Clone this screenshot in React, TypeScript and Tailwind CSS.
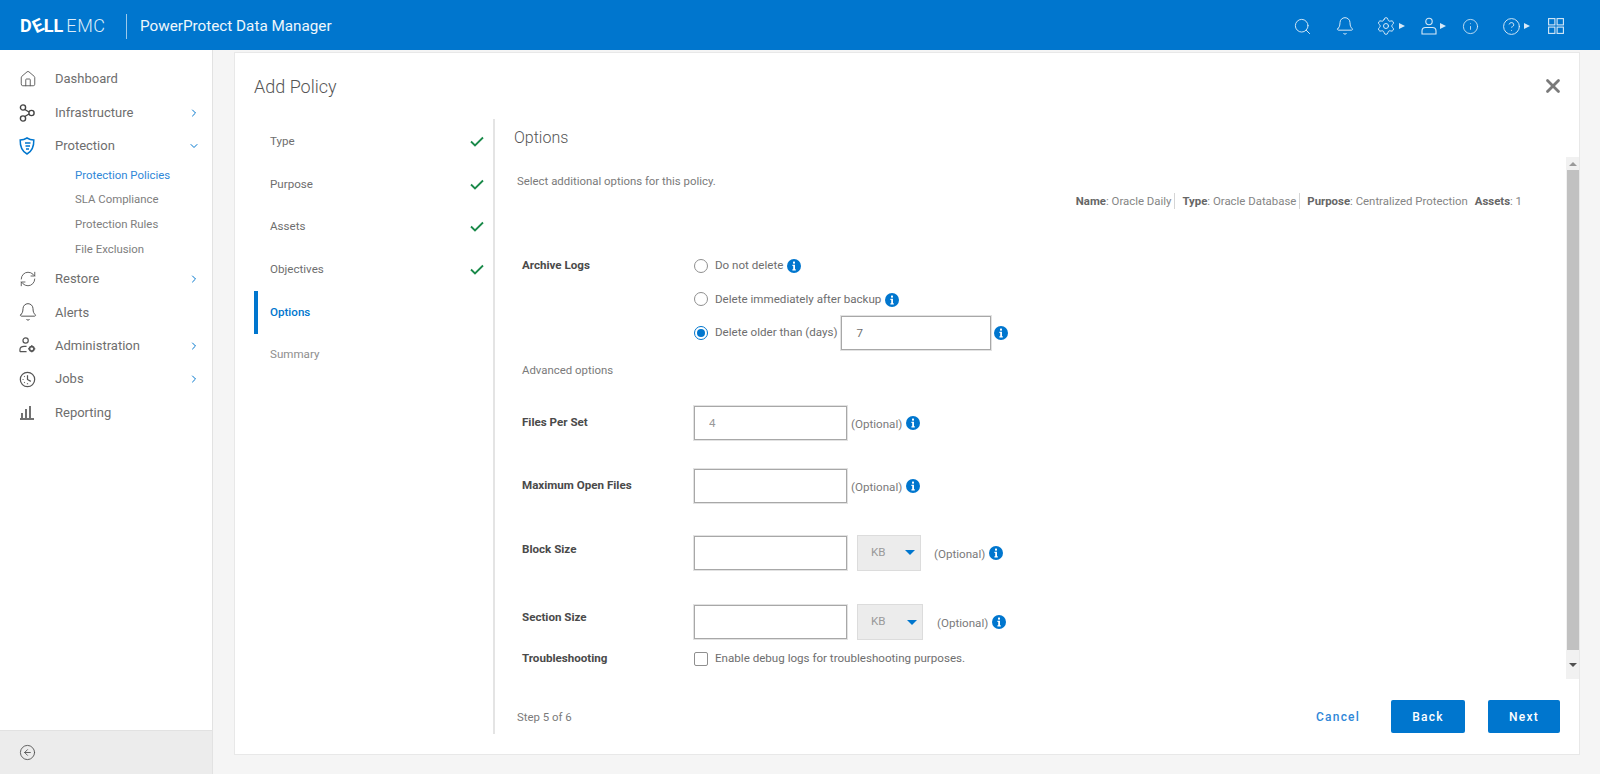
import { Bell, ChevronDown, ChevronRight, CircleArrowLeft, CircleHelp, House, Info, RefreshCw, Search, Settings, X } from "lucide-react";
import type { ReactNode } from "react";

const navIcon = "h-[18px] w-[18px] text-[#555]";

function InfraIcon() {
  return (
    <svg viewBox="0 0 16 18" className="h-[18px] w-[16px] text-[#444]" fill="none" stroke="currentColor" strokeWidth="1.4">
      <circle cx="4" cy="3.5" r="2.6" />
      <circle cx="4" cy="14.5" r="2.6" />
      <circle cx="12.5" cy="9" r="2.6" />
      <path d="M5.8 5.5 10 8M5.8 12.5 10 10" />
    </svg>
  );
}

function ShieldIcon() {
  return (
    <svg viewBox="0 0 16 18" className="h-[18px] w-[16px] text-[#0076ce]" fill="none" stroke="currentColor" strokeWidth="1.5">
      <path d="M8 1c2 1.300 4.300 2 6.800 2 .2 6.500-1.500 11.200-6.800 14C2.700 14.200 1 9.500 1.200 3 3.700 3 6 2.300 8 1Z" />
      <path d="M6 6h5.500M6.500 9H11M7 12h3" />
    </svg>
  );
}

function AdminIcon() {
  return (
    <svg viewBox="0 0 18 18" className="h-[17px] w-[17px] text-[#555]" fill="none" stroke="currentColor" strokeWidth="1.3">
      <circle cx="7" cy="3.800" r="2.800" />
      <path d="M1 15.500v-2c0-2.200 2-3.500 4.500-3.500H8M1 15.500h7" />
      <circle cx="13.500" cy="12.500" r="2.400" strokeWidth="1.800" />
      <path d="M13.500 8.800v1M13.500 15.200v1M9.800 12.500h1M16.200 12.500h1" strokeWidth="1.600" />
    </svg>
  );
}

function JobsIcon() {
  return (
    <svg viewBox="0 0 18 18" className="h-[17px] w-[17px] text-[#555]" fill="none" stroke="currentColor" strokeWidth="1.3">
      <circle cx="9" cy="9" r="7.600" />
      <path d="M9 4.500V9l3.500 2M3.800 9h1M9 13v1M5.500 5.500l.6.6M5.500 12.500l.6-.6" />
    </svg>
  );
}

function ReportIcon() {
  return (
    <svg viewBox="0 0 16 16" className="h-[16px] w-[16px] text-[#444]" fill="none" stroke="currentColor" strokeWidth="1.500">
      <path d="M3 14V9M7 14V5M11 14V2M1 15h14" />
    </svg>
  );
}

function UserIcon() {
  return (
    <svg viewBox="0 0 16 18" className="h-[18px] w-[16px]" fill="none" stroke="currentColor" strokeWidth="1.100">
      <circle cx="8" cy="4.500" r="3.200" />
      <path d="M1 17v-3c0-2 1.500-3.500 3.500-3.500h7c2 0 3.500 1.500 3.500 3.500v3Z" />
    </svg>
  );
}

function GridIcon() {
  return (
    <svg viewBox="0 0 16 16" className="h-[16px] w-[16px]" fill="none" stroke="currentColor" strokeWidth="1.100">
      <rect x="0.600" y="0.600" width="6.300" height="6.300" />
      <rect x="9.100" y="0.600" width="6.300" height="6.300" />
      <rect x="0.600" y="9.100" width="6.300" height="6.300" />
      <rect x="9.100" y="9.100" width="6.300" height="6.300" />
    </svg>
  );
}

function Caret() {
  return (
    <svg viewBox="0 0 6 6" className="ml-[3px] h-[6px] w-[6px]" fill="currentColor">
      <path d="M0 0l6 3-6 3Z" />
    </svg>
  );
}

function InfoDot() {
  return (
    <svg viewBox="0 0 14 14" className="h-[14px] w-[14px] shrink-0">
      <circle cx="7" cy="7" r="7" fill="#0076ce" />
      <rect x="6" y="2.600" width="2" height="2" fill="#fff" />
      <path d="M5.400 5.800H8v4.400h.8v1.200H5.400v-1.200h.8V7h-.8Z" fill="#fff" />
    </svg>
  );
}

function Check() {
  return (
    <svg viewBox="0 0 14 11" className="h-[11px] w-[14px] text-[#1a8a4a]" fill="none" stroke="currentColor" strokeWidth="1.800">
      <path d="M1 5.500 5 9.500 13 1.500" />
    </svg>
  );
}

function NavRow({ icon, label, chevron }: { icon: ReactNode; label: string; chevron?: "right" | "down" }) {
  return (
    <div className="flex h-[33.4px] items-center pl-[19px] pr-[12px] text-[13px] text-[#6e6e6e]">
      <span className="flex w-[36px] shrink-0 items-center">{icon}</span>
      <span className="flex-1">{label}</span>
      {chevron === "right" && <ChevronRight className="h-[12px] w-[12px] text-[#0076ce]" strokeWidth={2} />}
      {chevron === "down" && <ChevronDown className="h-[12px] w-[12px] text-[#0076ce]" strokeWidth={2} />}
    </div>
  );
}

function SubRow({ label, active }: { label: string; active?: boolean }) {
  return (
    <div className={active ? "flex h-[24.9px] items-center pl-[75px] text-[11.4px] text-[#2f87d8]" : "flex h-[24.9px] items-center pl-[75px] text-[11.4px] text-[#7e7e7e]"}>
      {label}
    </div>
  );
}

function Step({ label, done, active, muted }: { label: string; done?: boolean; active?: boolean; muted?: boolean }) {
  let cls = "flex h-[42.65px] items-center border-l-4 border-transparent pl-3 pr-[9px] text-[11.6px] text-[#6e6e6e]";
  if (active) cls = "flex h-[42.65px] items-center border-l-4 border-[#0076ce] pl-3 pr-[9px] text-[11.6px] font-medium text-[#0076ce]";
  if (muted) cls = "flex h-[42.65px] items-center border-l-4 border-transparent pl-3 pr-[9px] text-[11.6px] text-[#8e8e8e]";
  return (
    <div className={cls}>
      <span className="flex-1">{label}</span>
      {done && <Check />}
    </div>
  );
}

function Radio({ label, checked }: { label: string; checked?: boolean }) {
  return (
    <span className="flex items-center text-[11.6px] text-[#6e6e6e]">
      {checked ? (
        <span className="flex h-[14px] w-[14px] items-center justify-center rounded-full border border-[#0076ce]">
          <span className="h-[8px] w-[8px] rounded-full bg-[#0076ce]" />
        </span>
      ) : (
        <span className="h-[14px] w-[14px] rounded-full border border-[#8f8f8f]" />
      )}
      <span className="ml-[7px]">{label}</span>
    </span>
  );
}

function TextBox({ value, width, faint }: { value?: string; width: string; faint?: boolean }) {
  return (
    <input
      readOnly
      value={value ?? ""}
      className={`${width} h-[34px] border border-[#a8a8a8] bg-white px-[14px] text-[11.6px] outline-none ring-1 ring-[#e2e2e2] ${faint ? "text-[#999]" : "text-[#6e6e6e]"}`}
    />
  );
}

function UnitSelect({ width }: { width: string }) {
  return (
    <span className={`${width} flex h-[36px] items-center justify-between border border-[#dcdcdc] bg-[#ececec] pl-[13px] pr-[5px] text-[11.6px] text-[#9a9a9a]`}>
      KB
      <svg viewBox="0 0 10 5" className="h-[5px] w-[10px]" fill="#0076ce">
        <path d="M0 0h10L5 5Z" />
      </svg>
    </span>
  );
}

function Field({ label, labelClass, children, rowClass }: { label: string; labelClass?: string; children: ReactNode; rowClass: string }) {
  return (
    <div className={`flex items-center ${rowClass}`}>
      <span className={`w-[172px] shrink-0 text-[11.6px] font-bold text-[#4a4a4a] ${labelClass ?? ""}`}>{label}</span>
      {children}
    </div>
  );
}

function Optional() {
  return <span className="text-[11.6px] text-[#7a7a7a]">(Optional)</span>;
}

function Meta({ name, value, divider }: { name: string; value: string; divider?: boolean }) {
  return (
    <span className={divider ? "border-r border-[#d5d5d5] pr-[3px] mr-[7px]" : "mr-[7px] last:mr-0"}>
      <span className="font-bold text-[#666]">{name}</span>
      <span className="text-[#858585]">: {value}</span>
    </span>
  );
}

export default function App() {
  return (
    <div className="flex h-[774px] w-[1600px] flex-col overflow-hidden bg-[#f5f5f5] font-['Roboto',sans-serif]">
      <header className="flex h-[50px] shrink-0 items-center bg-[#0076ce] pt-[2px] text-white">
        <div className="ml-[20px] flex w-[87px] items-baseline whitespace-nowrap text-[18px] leading-none">
          <span className="font-bold">
            D<span className="mx-[1px] inline-block -rotate-[25deg]">E</span>LL
          </span>
          <span className="ml-[3px] font-light tracking-[0.6px] text-[#dcecf8]">EMC</span>
        </div>
        <div className="ml-[19px] h-[25px] w-px bg-[#9cc9ea]" />
        <div className="ml-[13px] flex-1 text-[15.25px] text-[#eef6fc]">PowerProtect Data Manager</div>
        <div className="flex items-center text-[#d7e9f7]">
          <Search className="h-[19px] w-[19px]" strokeWidth={1.2} />
          <Bell className="ml-[23px] h-[20px] w-[20px]" strokeWidth={1.2} />
          <Settings className="ml-[21px] h-[20px] w-[20px]" strokeWidth={1.2} />
          <Caret />
          <span className="ml-[16px] flex items-center">
            <UserIcon />
            <Caret />
          </span>
          <HeaderInfo />
          <CircleHelp className="ml-[23px] h-[19px] w-[19px]" strokeWidth={1.2} />
          <Caret />
          <span className="ml-[18px] mr-[36px]">
            <GridIcon />
          </span>
        </div>
      </header>

      <div className="flex min-h-0 flex-1">
        <aside className="flex w-[213px] shrink-0 flex-col border-r border-[#e2e2e2] bg-white">
          <nav className="flex-1 pt-[12.5px]">
            <NavRow icon={<House className={navIcon} strokeWidth={1.2} />} label="Dashboard" />
            <NavRow icon={<InfraIcon />} label="Infrastructure" chevron="right" />
            <NavRow icon={<ShieldIcon />} label="Protection" chevron="down" />
            <SubRow label="Protection Policies" active />
            <SubRow label="SLA Compliance" />
            <SubRow label="Protection Rules" />
            <SubRow label="File Exclusion" />
            <NavRow icon={<RefreshCw className={navIcon} strokeWidth={1.2} />} label="Restore" chevron="right" />
            <NavRow icon={<Bell className="-ml-px h-[20px] w-[20px] text-[#555]" strokeWidth={1.2} />} label="Alerts" />
            <NavRow icon={<AdminIcon />} label="Administration" chevron="right" />
            <NavRow icon={<JobsIcon />} label="Jobs" chevron="right" />
            <NavRow icon={<ReportIcon />} label="Reporting" />
          </nav>
          <div className="flex h-[44px] shrink-0 items-center border-t border-[#e2e2e2] bg-[#ececec] pl-[19px]">
            <CircleArrowLeft className="h-[17px] w-[17px] text-[#555]" strokeWidth={1.3} />
          </div>
        </aside>

        <main className="min-w-0 flex-1 pb-[19px] pl-[21px] pr-[20px] pt-[2px]">
          <div className="flex h-full flex-col border border-[#e8e8e8] bg-white">
            <div className="flex h-[66px] shrink-0 items-start justify-between pl-[19px] pr-[15px] pt-[20px]">
              <h1 className="mt-px text-[18px] font-light leading-[26px] text-[#555]">Add Policy</h1>
              <X className="mt-[2px] h-[22px] w-[22px] text-[#7a7a7a]" strokeWidth={3} />
            </div>

            <div className="flex min-h-0 flex-1 pb-[20px] pl-[19px]">
              <div className="w-[239px] shrink-0 pt-[1.4px]">
                <Step label="Type" done />
                <Step label="Purpose" done />
                <Step label="Assets" done />
                <Step label="Objectives" done />
                <Step label="Options" active />
                <Step label="Summary" muted />
              </div>

              <div className="flex min-w-0 flex-1 flex-col border-l-2 border-[#e4e4e4]">
                <h2 className="flex h-[38px] shrink-0 items-center pl-[19px] text-[16px] font-light text-[#555]">Options</h2>

                <div className="flex h-[522px] shrink-0">
                  <div className="min-w-0 flex-1 pl-[22px] pr-[44px]">
                    <p className="mt-[16px] h-[16px] text-[11.4px] leading-[16px] text-[#7a7a7a]">Select additional options for this policy.</p>
                    <div className="mt-[4px] flex h-[16px] justify-end text-[11.4px] leading-[16px]">
                      <Meta name="Name" value="Oracle Daily" divider />
                      <Meta name="Type" value="Oracle Database" divider />
                      <Meta name="Purpose" value="Centralized Protection" />
                      <Meta name="Assets" value="1" />
                    </div>

                    <div className="pl-[5px]">
                      <Field label="Archive Logs" rowClass="mt-[40px] h-[34px]">
                        <Radio label="Do not delete" />
                        <span className="ml-[4px]"><InfoDot /></span>
                      </Field>
                      <Field label="" rowClass="h-[33px]">
                        <Radio label="Delete immediately after backup" />
                        <span className="ml-[4px]"><InfoDot /></span>
                      </Field>
                      <Field label="" rowClass="h-[34px]">
                        <Radio label="Delete older than (days)" checked />
                        <span className="ml-[4px]"><TextBox value="7" width="w-[150px]" /></span>
                        <span className="ml-[3px]"><InfoDot /></span>
                      </Field>

                      <p className="mt-[12px] h-[16px] text-[11.4px] leading-[16px] text-[#7a7a7a]">Advanced options</p>

                      <Field label="Files Per Set" rowClass="mt-[28px] h-[34px]">
                        <TextBox value="4" width="w-[153px]" faint />
                        <span className="ml-[4px]"><Optional /></span>
                        <span className="ml-[4px]"><InfoDot /></span>
                      </Field>
                      <Field label="Maximum Open Files" rowClass="mt-[29px] h-[34px]">
                        <TextBox width="w-[153px]" />
                        <span className="ml-[4px]"><Optional /></span>
                        <span className="ml-[4px]"><InfoDot /></span>
                      </Field>
                      <Field label="Block Size" labelClass="pb-[6px]" rowClass="mt-[32px] h-[35px]">
                        <TextBox width="w-[153px]" />
                        <span className="ml-[10px]"><UnitSelect width="w-[64px]" /></span>
                        <span className="ml-[13px]"><Optional /></span>
                        <span className="ml-[4px]"><InfoDot /></span>
                      </Field>
                      <Field label="Section Size" labelClass="pb-[8px]" rowClass="mt-[34px] h-[36px]">
                        <TextBox width="w-[153px]" />
                        <span className="ml-[10px]"><UnitSelect width="w-[66px]" /></span>
                        <span className="ml-[14px]"><Optional /></span>
                        <span className="ml-[4px]"><InfoDot /></span>
                      </Field>
                      <Field label="Troubleshooting" rowClass="mt-[10px] h-[18px]">
                        <span className="h-[14px] w-[14px] rounded-[2px] border border-[#8f8f8f]" />
                        <span className="ml-[7px] text-[11.6px] text-[#6e6e6e]">Enable debug logs for troubleshooting purposes.</span>
                      </Field>
                    </div>
                  </div>

                  {/* fake scrollbar, the real one would not keep this look */}
                  <div className="flex w-[13px] shrink-0 flex-col bg-[#f1f1f1]">
                    <div className="flex h-[13px] items-center justify-center">
                      <svg viewBox="0 0 8 4" className="h-[4px] w-[8px]" fill="#9a9a9a"><path d="M4 0l4 4H0Z" /></svg>
                    </div>
                    <div className="ml-px h-[480px] bg-[#c1c1c1]" />
                    <div className="flex flex-1 items-center justify-center">
                      <svg viewBox="0 0 8 4" className="h-[4px] w-[8px]" fill="#505050"><path d="M0 0h8L4 4Z" /></svg>
                    </div>
                  </div>
                </div>

                <div className="flex flex-1 items-end pb-px pl-[22px] pr-[19px]">
                  <span className="mb-[7px] flex-1 text-[11.4px] text-[#7a7a7a]">Step 5 of 6</span>
                  <button className="mb-[7px] mr-[31px] text-[12px] font-medium tracking-[1.2px] text-[#2f87d8]">Cancel</button>
                  <button className="mr-[23px] h-[33px] w-[74px] rounded-[2px] bg-[#0076ce] text-[12px] font-medium tracking-[1.2px] text-white">Back</button>
                  <button className="h-[33px] w-[72px] rounded-[2px] bg-[#0076ce] text-[12px] font-medium tracking-[1.2px] text-white">Next</button>
                </div>
              </div>
            </div>
          </div>
        </main>
      </div>
    </div>
  );
}

function HeaderInfo() {
  return <Info className="ml-[16px] h-[17px] w-[17px]" strokeWidth={1.2} />;
}
